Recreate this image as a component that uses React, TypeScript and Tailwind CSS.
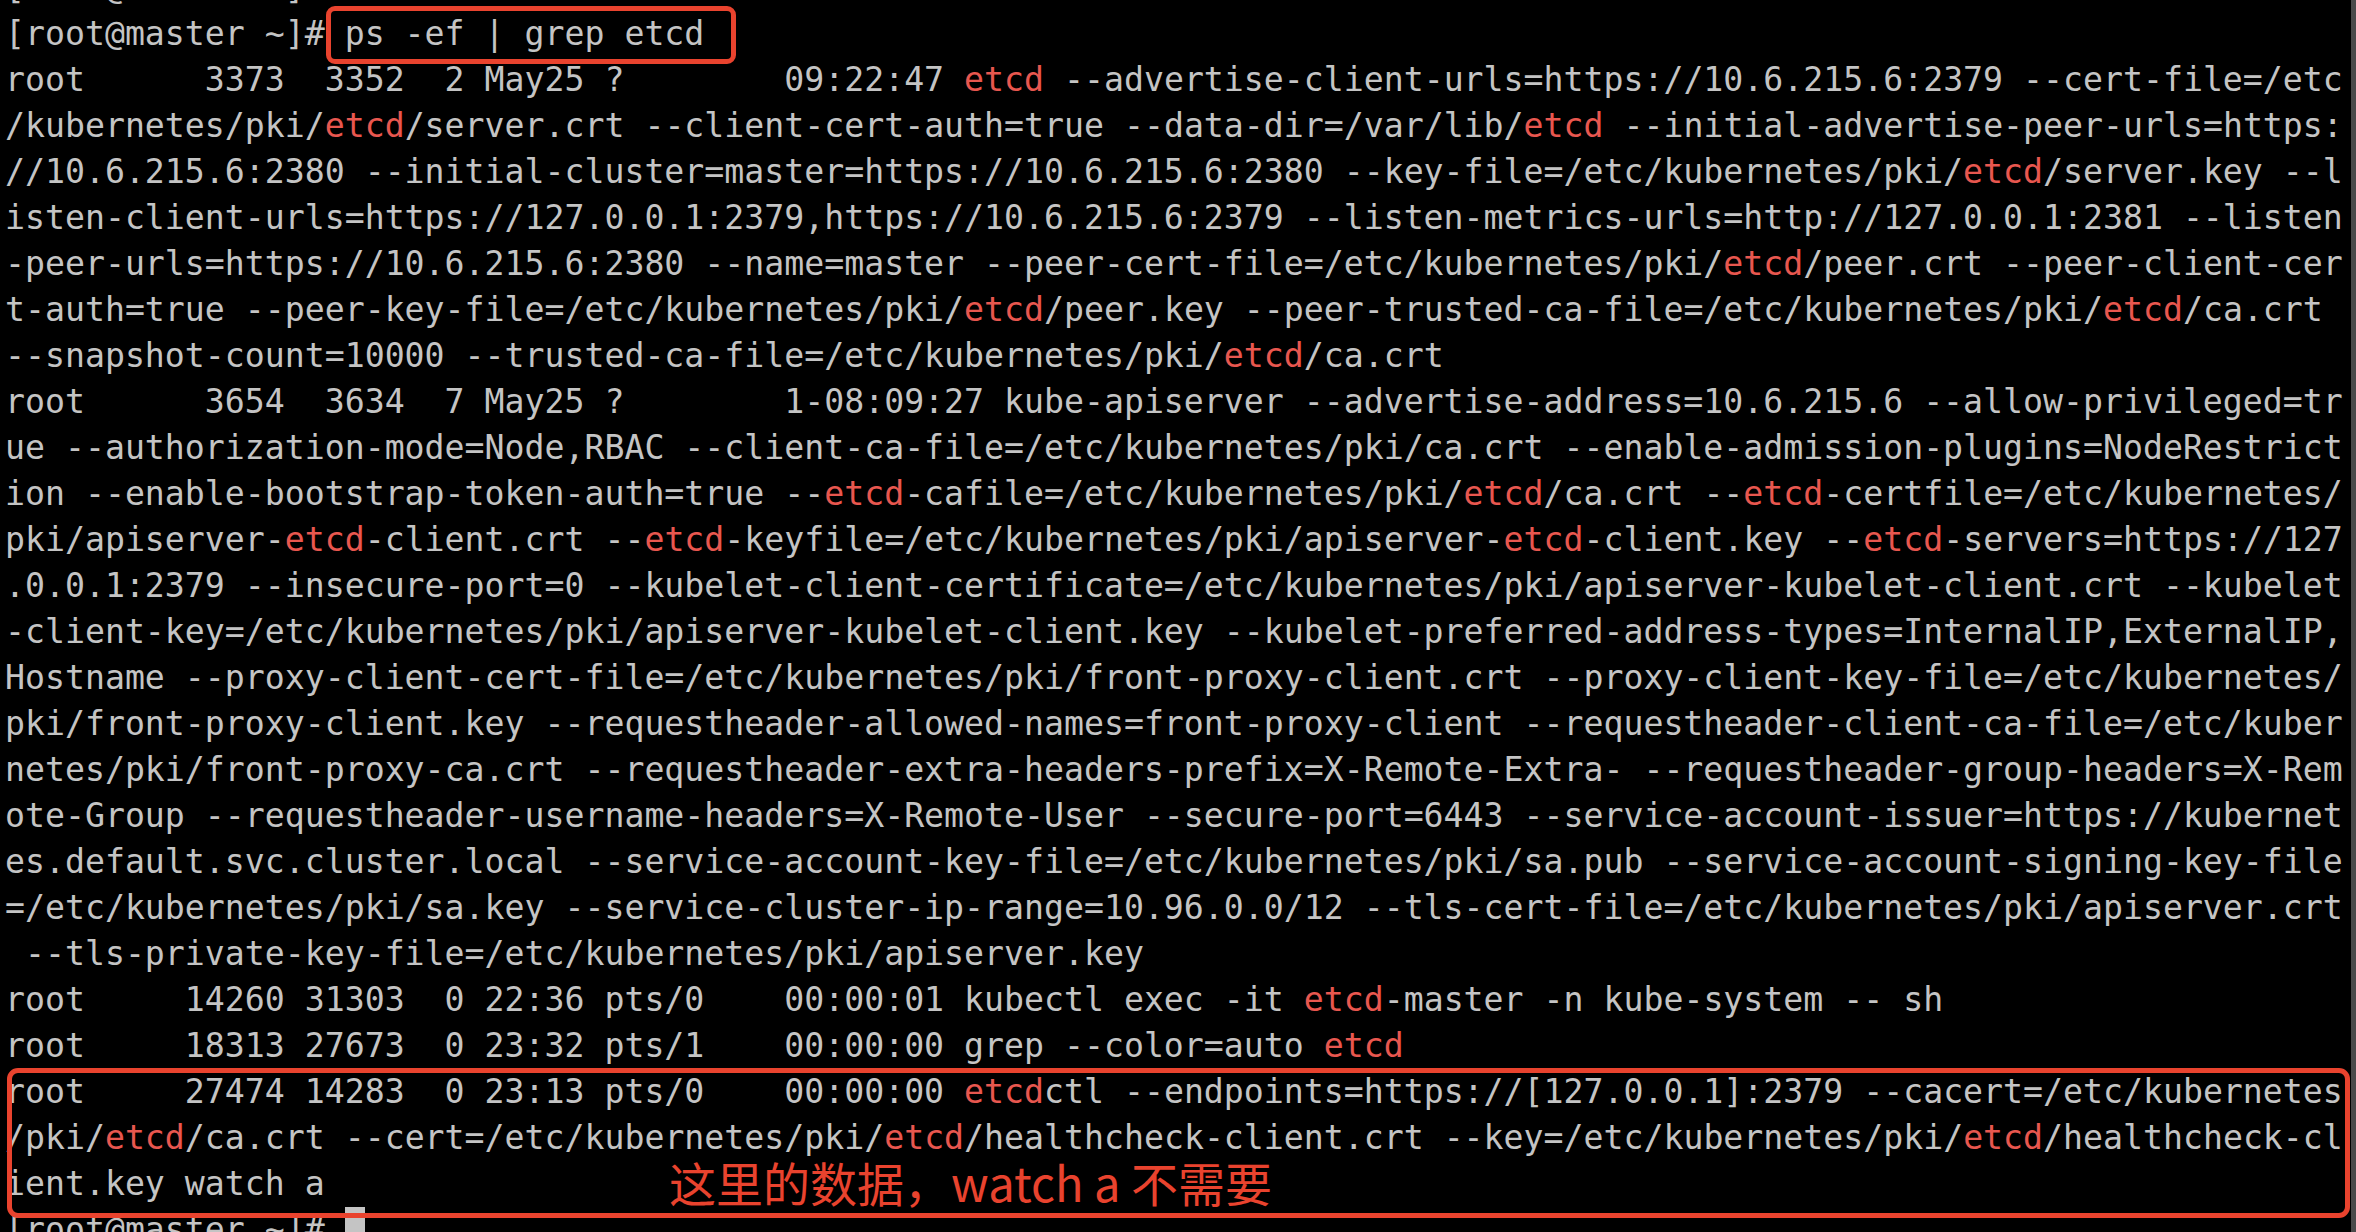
import React from "react";

// terminal width in columns, rows wrap hard at this
const COLS = 117;

const processes = [
  "root      3373  3352  2 May25 ?        09:22:47 etcd --advertise-client-urls=https://10.6.215.6:2379 --cert-file=/etc/kubernetes/pki/etcd/server.crt --client-cert-auth=true --data-dir=/var/lib/etcd --initial-advertise-peer-urls=https://10.6.215.6:2380 --initial-cluster=master=https://10.6.215.6:2380 --key-file=/etc/kubernetes/pki/etcd/server.key --listen-client-urls=https://127.0.0.1:2379,https://10.6.215.6:2379 --listen-metrics-urls=http://127.0.0.1:2381 --listen-peer-urls=https://10.6.215.6:2380 --name=master --peer-cert-file=/etc/kubernetes/pki/etcd/peer.crt --peer-client-cert-auth=true --peer-key-file=/etc/kubernetes/pki/etcd/peer.key --peer-trusted-ca-file=/etc/kubernetes/pki/etcd/ca.crt --snapshot-count=10000 --trusted-ca-file=/etc/kubernetes/pki/etcd/ca.crt",
  "root      3654  3634  7 May25 ?        1-08:09:27 kube-apiserver --advertise-address=10.6.215.6 --allow-privileged=true --authorization-mode=Node,RBAC --client-ca-file=/etc/kubernetes/pki/ca.crt --enable-admission-plugins=NodeRestriction --enable-bootstrap-token-auth=true --etcd-cafile=/etc/kubernetes/pki/etcd/ca.crt --etcd-certfile=/etc/kubernetes/pki/apiserver-etcd-client.crt --etcd-keyfile=/etc/kubernetes/pki/apiserver-etcd-client.key --etcd-servers=https://127.0.0.1:2379 --insecure-port=0 --kubelet-client-certificate=/etc/kubernetes/pki/apiserver-kubelet-client.crt --kubelet-client-key=/etc/kubernetes/pki/apiserver-kubelet-client.key --kubelet-preferred-address-types=InternalIP,ExternalIP,Hostname --proxy-client-cert-file=/etc/kubernetes/pki/front-proxy-client.crt --proxy-client-key-file=/etc/kubernetes/pki/front-proxy-client.key --requestheader-allowed-names=front-proxy-client --requestheader-client-ca-file=/etc/kubernetes/pki/front-proxy-ca.crt --requestheader-extra-headers-prefix=X-Remote-Extra- --requestheader-group-headers=X-Remote-Group --requestheader-username-headers=X-Remote-User --secure-port=6443 --service-account-issuer=https://kubernetes.default.svc.cluster.local --service-account-key-file=/etc/kubernetes/pki/sa.pub --service-account-signing-key-file=/etc/kubernetes/pki/sa.key --service-cluster-ip-range=10.96.0.0/12 --tls-cert-file=/etc/kubernetes/pki/apiserver.crt --tls-private-key-file=/etc/kubernetes/pki/apiserver.key",
  "root     14260 31303  0 22:36 pts/0    00:00:01 kubectl exec -it etcd-master -n kube-system -- sh",
  "root     18313 27673  0 23:32 pts/1    00:00:00 grep --color=auto etcd",
  "root     27474 14283  0 23:13 pts/0    00:00:00 etcdctl --endpoints=https://[127.0.0.1]:2379 --cacert=/etc/kubernetes/pki/etcd/ca.crt --cert=/etc/kubernetes/pki/etcd/healthcheck-client.crt --key=/etc/kubernetes/pki/etcd/healthcheck-client.key watch a",
];

const wrapLine = (line: string) => {
  const rows: string[] = [];
  for (let i = 0; i < line.length; i += COLS) rows.push(line.slice(i, i + COLS));
  return rows;
};

const Highlight = ({ text }: { text: string }) => (
  <>
    {text.split(/(etcd)/).map((part, i) =>
      part === "etcd" ? (
        <span key={i} className="text-[#e8574f]">
          {part}
        </span>
      ) : (
        part
      )
    )}
  </>
);

const App = () => {
  const rows = processes.flatMap(wrapLine);

  return (
    <div className="flex h-[1232px] w-full overflow-hidden bg-black">
      <div className="relative flex-1 overflow-hidden">
        <div className="-mt-[35px] whitespace-pre pl-[5px] font-['DejaVu_Sans_Mono',monospace] text-[33.2px] leading-[46px] text-[#c4c4c4]">
          <div>[root@master ~]# </div>
          <div>[root@master ~]# ps -ef | grep etcd</div>
          {rows.map((row, i) => (
            <div key={i}>
              <Highlight text={row} />
            </div>
          ))}
          <div>
            [root@master ~]# <span className="inline-block h-[46px] w-[20px] bg-[#c4c4c4] align-top" />
          </div>
        </div>

        {/* annotations drawn over the terminal */}
        <div className="absolute left-[326px] top-[6px] h-[58px] w-[410px] rounded-[9px] border-[5px] border-[#e9432e]" />
        <div className="absolute left-[7px] top-[1068px] h-[150px] w-[2343px] rounded-[11px] border-[5px] border-[#e9432e]" />
        <div className="absolute left-[669px] top-[1152px] whitespace-pre font-['Noto_Sans_CJK_SC',sans-serif] text-[47px] leading-[60px] text-[#e9432e]">
          这里的数据，watch a 不需要
        </div>
      </div>
      <div className="w-[5px] bg-[#4a4a4a]" />
    </div>
  );
};

export default App;
